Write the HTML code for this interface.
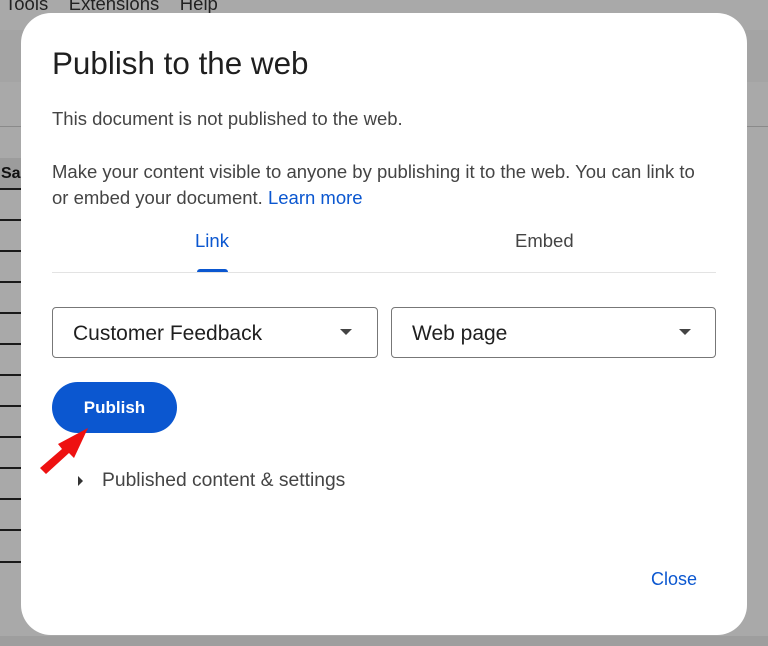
<!DOCTYPE html>
<html><head><style>
*{margin:0;padding:0;box-sizing:border-box}
body{width:768px;height:646px;background:#a9a9a9;position:relative;overflow:hidden;font-family:"Liberation Sans",Arial,sans-serif}
.a{position:absolute}
.hl{position:absolute;left:0;width:21px;height:2px;background:#1a1a1a}
.dlg{position:absolute;left:21px;top:13px;width:726px;height:622px;background:#fff;border-radius:30px}
.t{position:absolute;white-space:nowrap}
.dd{position:absolute;top:307px;height:51px;border:1px solid #777;border-radius:4px}
.dd span{position:absolute;left:20px;top:14px;font-size:21px;color:#1f1f1f}
.car{position:absolute;top:21px;width:0;height:0;border-left:6px solid transparent;border-right:6px solid transparent;border-top:6px solid #444}
</style></head><body>
<div class="t" style="left:5px;top:-7px;font-size:18.5px;color:#222">Tools&nbsp;&nbsp;&nbsp;&nbsp;Extensions&nbsp;&nbsp;&nbsp;&nbsp;Help</div>
<div class="a" style="left:0;top:30px;width:768px;height:52px;background:#a4a4a4"></div>
<div class="a" style="left:0;top:126px;width:768px;height:1px;background:#8a8a8a"></div>
<div class="a" style="left:0;top:158px;width:21px;height:30px;background:#9c9c9c"></div>
<div class="t" style="left:1px;top:165px;font-size:16px;font-weight:bold;color:#111">Sa</div>
<div class="hl" style="top:188px"></div><div class="hl" style="top:219px"></div><div class="hl" style="top:250px"></div>
<div class="hl" style="top:281px"></div><div class="hl" style="top:312px"></div><div class="hl" style="top:343px"></div>
<div class="hl" style="top:374px"></div><div class="hl" style="top:405px"></div><div class="hl" style="top:436px"></div>
<div class="hl" style="top:467px"></div><div class="hl" style="top:498px"></div><div class="hl" style="top:529px"></div>
<div class="hl" style="top:561px"></div>
<div class="a" style="left:0;top:636px;width:768px;height:10px;background:#9e9e9e"></div>
<div class="dlg"></div>
<div class="t" style="left:52px;top:46px;font-size:31.4px;color:#1f1f1f">Publish to the web</div>
<div class="t" style="left:52px;top:108px;font-size:18.5px;color:#444">This document is not published to the web.</div>
<div class="t" style="left:52px;top:159px;font-size:18.5px;color:#444;line-height:26px">Make your content visible to anyone by publishing it to the web. You can link to<br>or embed your document. <span style="color:#0b57d0">Learn more</span></div>
<div class="t" style="left:195px;top:230px;font-size:18.5px;color:#0b57d0">Link</div>
<div class="t" style="left:515px;top:230px;font-size:18.5px;color:#444">Embed</div>
<div class="a" style="left:52px;top:272px;width:664px;height:1px;background:#e3e3e3"></div>
<div class="a" style="left:197px;top:269px;width:31px;height:3px;background:#0b57d0;border-radius:3px 3px 0 0"></div>
<div class="dd" style="left:52px;width:326px"><span>Customer Feedback</span><div class="car" style="left:287px"></div></div>
<div class="dd" style="left:391px;width:325px"><span>Web page</span><div class="car" style="left:287px"></div></div>
<div class="a" style="left:52px;top:382px;width:125px;height:51px;background:#0b57d0;border-radius:26px;color:#fff;font-size:17px;font-weight:bold;text-align:center;line-height:51px">Publish</div>
<svg class="a" style="left:0;top:0" width="768" height="646"><path d="M40 468 L62 449 L58 444 L88 428 L74 458 L69 453 L46 474 Z" fill="#ee1111"/></svg>
<div class="a" style="left:78px;top:476px;width:0;height:0;border-top:5px solid transparent;border-bottom:5px solid transparent;border-left:5px solid #333"></div>
<div class="t" style="left:102px;top:470px;font-size:19.3px;color:#444">Published content &amp; settings</div>
<div class="t" style="left:651px;top:569px;font-size:18px;color:#0b57d0">Close</div>
</body></html>
